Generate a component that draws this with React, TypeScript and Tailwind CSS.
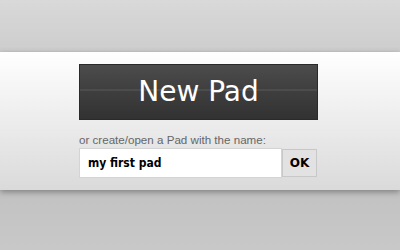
export default function App() {
  return (
    <div className="w-[400px] h-[250px] flex flex-col overflow-hidden bg-gradient-to-b from-[#d8d8d8] via-[#cfcfcf] to-[#c2c2c2]">
      <div className="h-[52px] shrink-0 bg-gradient-to-b from-[#d9d9d9] to-[#cdcdcd]" />
      <div className="h-[138px] shrink-0 bg-gradient-to-b from-[#ffffff] to-[#dadada] shadow-[0_2px_6px_rgba(0,0,0,0.35)] relative">
        <div className="pl-[79px] pt-[12px] w-[318px] box-content">
          <div className="w-[239px] h-[56px] border border-[#2a2a2a] bg-gradient-to-b from-[#4c4c4c] via-[#3e3e3e] to-[#323232] flex items-center justify-center relative overflow-hidden">
            <div className="absolute left-0 right-0 top-[24px] h-[2px] bg-[#5a5a5a] opacity-50" />
            <span className="relative text-white text-[28px] leading-none" style={{ fontFamily: '"DejaVu Sans", Verdana, sans-serif' }}>
              New Pad
            </span>
          </div>
          <div className="mt-[13px] text-[11.6px] leading-[14px] text-[#666666]" style={{ fontFamily: '"Liberation Sans", Arial, sans-serif' }}>
            or create/open a Pad with the name:
          </div>
          <div className="flex mt-[1px] w-[238px] h-[30px]">
            <div className="flex-1 bg-white border border-[#d4d4d4] flex items-center pl-[8px] text-[12px] font-bold text-black" style={{ fontFamily: '"DejaVu Sans Condensed", "DejaVu Sans", Verdana, sans-serif', fontStretch: 'condensed' }}>
              my first pad
            </div>
            <div className="w-[35px] h-[28px] mt-[1px] bg-[#e2e2e2] border border-[#c8c8c8] flex items-center justify-center text-[12px] font-bold text-black" style={{ fontFamily: '"DejaVu Sans", Verdana, sans-serif' }}>
              OK
            </div>
          </div>
        </div>
      </div>
      <div className="flex-1 bg-gradient-to-b from-[#c2c2c2] to-[#c8c8c8]" />
    </div>
  );
}
